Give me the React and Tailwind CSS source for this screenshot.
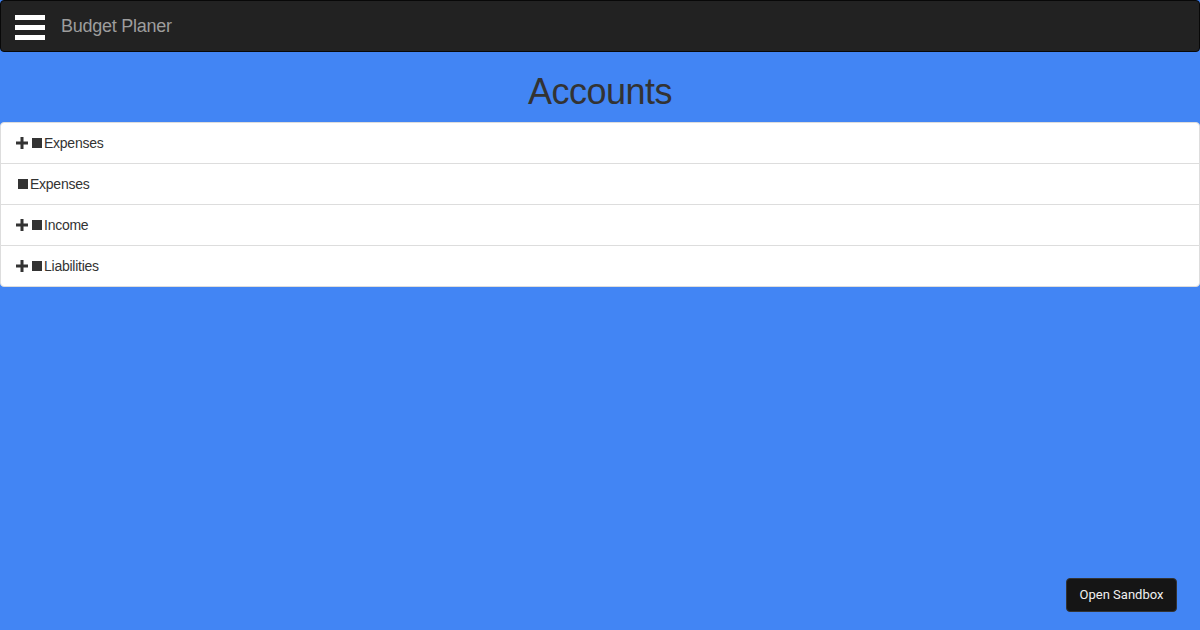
import React from "react";

function Plus() {
  return (
    <svg width="12" height="12" viewBox="0 0 12 12" className="mr-[4px] shrink-0">
      <rect x="0" y="4.5" width="12" height="3" fill="#333" />
      <rect x="4.5" y="0" width="3" height="12" fill="#333" />
    </svg>
  );
}

function Square() {
  return <span className="inline-block w-[10px] h-[10px] bg-[#333] mr-[2px] shrink-0" />;
}

function Item({ plus, label, first, last }) {
  return (
    <div
      className={
        "flex items-center h-[42px] px-[15px] -mb-px border border-[#ddd] bg-white text-[14px] tracking-[-0.25px] text-[#333] " +
        (first ? "rounded-t-[4px] " : "") +
        (last ? "rounded-b-[4px] " : "")
      }
    >
      {plus ? <Plus /> : <span className="w-[2px]" />}
      <Square />
      <span>{label}</span>
    </div>
  );
}

export default function App() {
  return (
    <div
      className="relative w-[1200px] h-[630px] bg-[#4285f4] text-[#333] overflow-hidden"
      style={{ fontFamily: '"Liberation Sans", Arial, sans-serif' }}
    >
      <nav className="h-[52px] bg-[#222] border border-[#080808] rounded-[4px] flex items-center">
        <div className="flex flex-col gap-[5px] ml-[14px] mt-[2px]">
          <span className="block w-[30px] h-[5px] bg-white" />
          <span className="block w-[30px] h-[5px] bg-white" />
          <span className="block w-[30px] h-[5px] bg-white" />
        </div>
        <span className="ml-[16px] text-[18px] tracking-[-0.25px] text-[#9d9d9d]">Budget Planer</span>
      </nav>
      <h1 className="mt-[20px] mb-[10px] text-center text-[36px] leading-[40px] tracking-[-0.5px] text-[#333]">Accounts</h1>
      <div className="flex flex-col">
        <Item plus label="Expenses" first />
        <Item label="Expenses" />
        <Item plus label="Income" />
        <Item plus label="Liabilities" last />
      </div>
      <button
        className="absolute left-[1066px] top-[578px] w-[111px] h-[34px] rounded-[4px] bg-[#151515] border border-[#333] text-[13px] text-[#f0f0f0] flex items-center justify-center"
        style={{ fontFamily: 'Roboto, "Liberation Sans", sans-serif' }}
      >
        Open Sandbox
      </button>
    </div>
  );
}
